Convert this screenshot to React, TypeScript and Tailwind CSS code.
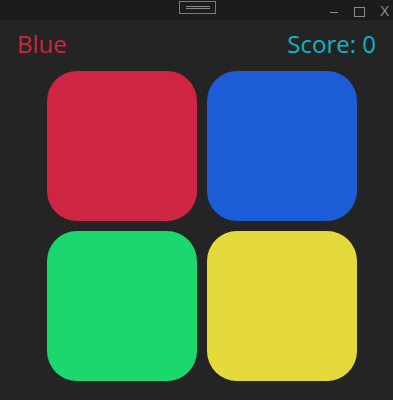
export default function App() {
  const tiles = [
    { name: "red", cls: "bg-[#cd2542]" },
    { name: "blue", cls: "bg-[#1c5cd6]" },
    { name: "green", cls: "bg-[#1bd76d]" },
    { name: "yellow", cls: "bg-[#e4da3c]" },
  ];

  return (
    <div className="w-[393px] h-[400px] bg-[#242424] flex flex-col" style={{ fontFamily: '"Open Sans", "Noto Sans", sans-serif' }}>
      {/* Title bar */}
      <div className="relative h-[20px] bg-[#1c1c1c] flex items-start">
        <div className="absolute left-[179px] top-[1px] w-[37px] h-[13px] border border-[#7a7a7a] flex flex-col items-center justify-center gap-[1px]">
          <div className="w-[24px] h-px bg-[#8a8a8a]" />
          <div className="w-[24px] h-px bg-[#8a8a8a]" />
        </div>
        <div className="absolute left-[330px] top-[12px] w-[8px] h-px bg-[#8a8a8a]" />
        <div className="absolute left-[354px] top-[7px] w-[11px] h-[10px] border border-[#8a8a8a]" />
        <span className="absolute left-[380px] top-[2px] text-[14px] leading-[18px] text-[#8a8a8a]" style={{ fontFamily: '"Liberation Sans", sans-serif' }}>
          X
        </span>
      </div>

      {/* Header */}
      <div className="flex justify-between items-center px-[17px] pt-[6px] h-[41px]">
        <span className="text-[24px] font-medium leading-none text-[#cd2542]">Blue</span>
        <span className="text-[24px] font-medium leading-none text-[#0fb4c8]">Score: 0</span>
      </div>

      {/* Grid */}
      <div className="mt-[10px] ml-[47px] grid grid-cols-[150px_150px] gap-[10px]">
        {tiles.map((t) => (
          <div key={t.name} className={`w-[150px] h-[150px] rounded-[30px] ${t.cls}`} />
        ))}
      </div>
    </div>
  );
}
